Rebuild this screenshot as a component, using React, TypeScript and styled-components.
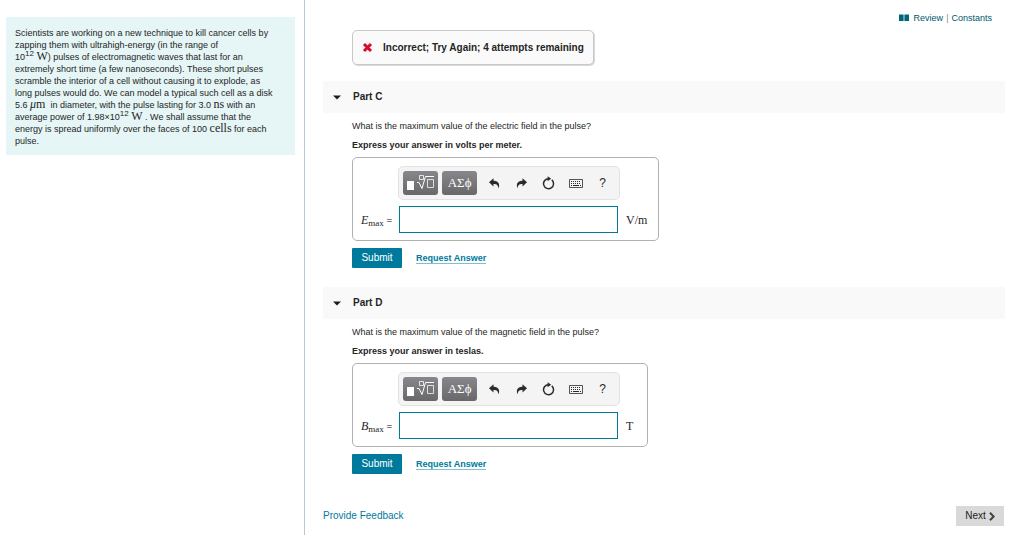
import React, { useId } from 'react';
import styled, { createGlobalStyle } from 'styled-components';

const SANS = '"Liberation Sans", Arial, Helvetica, sans-serif';
const SERIF = '"Liberation Serif", "Times New Roman", serif';
const TEAL = '#007a9c';

const GlobalStyle = createGlobalStyle`
  *, *::before, *::after { box-sizing: border-box; }
  body { margin: 0; background: #fff; color: #252525; font: 9px/12px ${SANS}; }
  p, h2 { margin: 0; }
  button, input { font: inherit; }
  svg { display: block; }
`;

const Page = styled.div`
  display: flex;
  min-height: 100vh;
`;

const Sidebar = styled.aside`
  flex: 0 0 305px;
  padding: 17px 9px 0 6px;
  border-right: 1px solid #b4c8dc;
`;

const Problem = styled.p`
  padding: 10px 9px 8px;
  background: #e6f5f6;
  white-space: nowrap;
`;

const Power = styled.sup`
  font-size: 8px;
  line-height: 0;
  vertical-align: 4px;
`;

const MathText = styled.span`
  font-family: ${SERIF};
  font-size: 12px;
  line-height: 0;
`;

const Main = styled.main`
  flex: 1;
  min-width: 0;
  padding: 12px 19px 9px 18px;
`;

const TopLinks = styled.nav`
  display: flex;
  justify-content: flex-end;
  align-items: center;
  gap: 3px;
  padding-right: 13px;
  color: #888;
`;

const TopLink = styled.a`
  display: flex;
  align-items: center;
  gap: 5px;
  color: #00566b;
  text-decoration: none;
`;

const Feedback = styled.div`
  display: flex;
  align-items: center;
  gap: 10px;
  width: fit-content;
  height: 35px;
  margin: 6px 0 16px 29px;
  padding: 0 9px;
  border: 1px solid #c8c8c8;
  border-radius: 5px;
  box-shadow: 1px 1px 0 #d8d8d8;
  background: #fafafa;
  font-size: 10px;
  font-weight: bold;
`;

const PartHeader = styled.h2`
  display: flex;
  align-items: center;
  gap: 12px;
  height: 32px;
  padding-left: 10px;
  background: #f9f9f9;
  font-size: 10px;
  font-weight: bold;
`;

const PartBody = styled.div`
  padding: 7px 0 19px 29px;
`;

const Instruction = styled.p`
  margin: 7px 0 6px;
  font-weight: bold;
`;

const AnswerBox = styled.div`
  display: grid;
  grid-template-columns: auto auto auto;
  align-items: center;
  gap: 6px;
  width: fit-content;
  height: 84px;
  padding: 8px 11px 7px 8px;
  border: 1px solid #b0b0b0;
  border-radius: 5px;
`;

const Toolbar = styled.div`
  grid-column: 2;
  display: flex;
  align-items: center;
  gap: 4px;
  height: 34px;
  padding: 0 3px 0 4px;
  border: 1px solid #e2e2e2;
  border-radius: 5px;
  background: #f4f4f4;
`;

const PaletteButton = styled.button`
  display: flex;
  align-items: center;
  justify-content: center;
  width: 35px;
  height: 24px;
  padding: 0;
  border: 0;
  border-radius: 3px;
  background: linear-gradient(#88888c, #68686a);
  color: #fff;
  font: 13px/16px ${SERIF};
`;

const ToolGroup = styled.div`
  display: flex;
`;

const ToolButton = styled.button`
  display: flex;
  align-items: center;
  justify-content: center;
  width: 27px;
  height: 24px;
  padding: 0;
  border: 0;
  background: none;
  color: #2b2b2b;
  font-size: 12px;
`;

const AnswerLabel = styled.label`
  grid-column: 1;
  font: 12px/14px ${SERIF};
`;

const Subscript = styled.sub`
  font-size: 9px;
  line-height: 0;
  vertical-align: -2px;
`;

const Equals = styled.span`
  margin-left: 3px;
  color: #777;
  font: bold 9px/12px ${SANS};
`;

const AnswerInput = styled.input`
  width: 219px;
  height: 27px;
  margin-left: 1px;
  padding: 0 6px;
  border: 1px solid ${TEAL};
  background: #fff;
`;

const Unit = styled.span`
  min-width: 10px;
  font: 12px/14px ${SERIF};
`;

const Actions = styled.div`
  display: flex;
  align-items: center;
  gap: 14px;
  margin-top: 7px;
`;

const SubmitButton = styled.button`
  width: 50px;
  height: 20px;
  padding: 0;
  border: 0;
  border-radius: 1px;
  background: ${TEAL};
  color: #fff;
  font-size: 10px;
`;

const RequestLink = styled.a`
  border-bottom: 1px solid #7fc0d0;
  color: ${TEAL};
  font-weight: bold;
  line-height: 10px;
  text-decoration: none;
`;

const Footer = styled.footer`
  display: flex;
  justify-content: space-between;
  align-items: center;
  padding: 13px 1px 0 0;
`;

const FooterLink = styled.a`
  color: ${TEAL};
  font-size: 10px;
  text-decoration: none;
`;

const NextButton = styled.button`
  display: flex;
  align-items: center;
  justify-content: center;
  gap: 3px;
  width: 48px;
  height: 20px;
  padding: 0;
  border: 0;
  border-radius: 1px;
  background: #d9d9d9;
  color: #222;
  font-size: 10px;
`;

const BookIcon = () => (
  <svg width="10" height="8" viewBox="0 0 10 8" fill="#00667c" aria-hidden="true">
    <path d="M0 .5h4.5v6.500H0zM5.500.5H10v6.500H5.500z" />
    <path d="M4.500 1h1v6.500h-1z" opacity=".4" />
  </svg>
);

const CrossIcon = () => (
  <svg width="11" height="11" viewBox="0 0 11 11" fill="none" aria-hidden="true">
    <path d="M2 2l7 7M9 2l-7 7" stroke="#dc0a28" strokeWidth="3" />
  </svg>
);

const CaretIcon = () => (
  <svg width="8" height="5" viewBox="0 0 8 5" aria-hidden="true">
    <path d="M0 .5h8L4 4.500z" fill="#1c1c1c" />
  </svg>
);

const TemplateIcon = () => (
  <svg width="27" height="16" viewBox="0 0 27 16" fill="none" stroke="#fff" aria-hidden="true">
    <path d="M0 6h7v9H0z" fill="#fff" stroke="none" />
    <path d="M12.500 .5h4v4h-4z" strokeWidth=".8" />
    <path d="M10 7.500h2l3 6L18.500 1.500H27" />
    <path d="M20.500 4.500h6v8h-6z" opacity=".75" />
  </svg>
);

const UndoIcon = () => (
  <svg width="11" height="11" viewBox="0 0 11 11" fill="currentColor" aria-hidden="true">
    <path d="M0 4.300 4.500.2v2.500c3.800 0 6 2.100 5.600 5.300-.1 1-.5 1.800-1 2.300.2-2.800-1-4.200-4.600-4.200v2.500z" />
  </svg>
);

const RedoIcon = () => (
  <svg width="11" height="11" viewBox="0 0 11 11" fill="currentColor" aria-hidden="true">
    <path d="M11 4.300 6.500.2v2.500C2.700 2.700.5 4.800.9 8c.1 1 .5 1.800 1 2.300-.2-2.800 1-4.200 4.600-4.200v2.500z" />
  </svg>
);

const ResetIcon = () => (
  <svg width="13" height="14" viewBox="0 0 13 14" fill="none" aria-hidden="true">
    <path d="M9.800 3.900A5 5 0 1 1 6.500 2.700" stroke="currentColor" strokeWidth="1.500" />
    <path d="M5.600.2 9.200 2.800 5.600 5.200z" fill="currentColor" />
  </svg>
);

const KeyboardIcon = () => (
  <svg width="14" height="9" viewBox="0 0 14 9" fill="none" stroke="currentColor" aria-hidden="true">
    <path d="M.5.5h13v8H.5z" strokeWidth=".8" />
    <path d="M2 2.500h10M2 4.500h10" strokeDasharray="1 1" />
    <path d="M2 6.500h1M4 6.500h6M11 6.500h1" />
  </svg>
);

const ChevronIcon = () => (
  <svg width="6" height="9" viewBox="0 0 6 9" fill="none" aria-hidden="true">
    <path d="M1 .8 4.600 4.500 1 8.200" stroke="#444" strokeWidth="2" />
  </svg>
);

interface PartProps {
  title: string;
  question: string;
  instruction: string;
  symbol: string;
  unit: string;
}

function Part({ title, question, instruction, symbol, unit }: PartProps) {
  const inputId = useId();
  return (
    <section>
      <PartHeader><CaretIcon />{title}</PartHeader>
      <PartBody>
        <p>{question}</p>
        <Instruction>{instruction}</Instruction>
        <AnswerBox>
          <Toolbar role="toolbar" aria-label="Equation tools">
            <PaletteButton type="button" aria-label="Templates"><TemplateIcon /></PaletteButton>
            <PaletteButton type="button">ΑΣϕ</PaletteButton>
            <ToolGroup>
              <ToolButton type="button" aria-label="Undo"><UndoIcon /></ToolButton>
              <ToolButton type="button" aria-label="Redo"><RedoIcon /></ToolButton>
              <ToolButton type="button" aria-label="Reset"><ResetIcon /></ToolButton>
              <ToolButton type="button" aria-label="Keyboard shortcuts"><KeyboardIcon /></ToolButton>
              <ToolButton type="button">?</ToolButton>
            </ToolGroup>
          </Toolbar>
          <AnswerLabel htmlFor={inputId}>
            <i>{symbol}</i><Subscript>max</Subscript><Equals>=</Equals>
          </AnswerLabel>
          <AnswerInput id={inputId} type="text" />
          <Unit>{unit}</Unit>
        </AnswerBox>
        <Actions>
          <SubmitButton type="button">Submit</SubmitButton>
          <RequestLink href="#answer">Request Answer</RequestLink>
        </Actions>
      </PartBody>
    </section>
  );
}

export default function App() {
  return (
    <>
      <GlobalStyle />
      <Page>
        <Sidebar>
          <Problem>
            Scientists are working on a new technique to kill cancer cells by<br />
            zapping them with ultrahigh-energy (in the range of<br />
            10<Power>12</Power> <MathText>W</MathText>) pulses of electromagnetic waves that last for an<br />
            extremely short time (a few nanoseconds). These short pulses<br />
            scramble the interior of a cell without causing it to explode, as<br />
            long pulses would do. We can model a typical such cell as a disk<br />
            5.6 <MathText><i>μ</i>m</MathText>{'\u00a0 '}in diameter, with the pulse lasting for 3.0 <MathText>ns</MathText> with an<br />
            average power of 1.98×10<Power>12</Power> <MathText>W</MathText> . We shall assume that the<br />
            energy is spread uniformly over the faces of 100 <MathText>cells</MathText> for each<br />
            pulse.
          </Problem>
        </Sidebar>
        <Main>
          <TopLinks>
            <TopLink href="#review"><BookIcon />Review</TopLink>
            <span>|</span>
            <TopLink href="#constants">Constants</TopLink>
          </TopLinks>
          <Feedback role="status">
            <CrossIcon />
            <span>Incorrect; Try Again; 4 attempts remaining</span>
          </Feedback>
          <Part
            title="Part C"
            question="What is the maximum value of the electric field in the pulse?"
            instruction="Express your answer in volts per meter."
            symbol="E"
            unit="V/m"
          />
          <Part
            title="Part D"
            question="What is the maximum value of the magnetic field in the pulse?"
            instruction="Express your answer in teslas."
            symbol="B"
            unit="T"
          />
          <Footer>
            <FooterLink href="#feedback">Provide Feedback</FooterLink>
            <NextButton type="button">Next<ChevronIcon /></NextButton>
          </Footer>
        </Main>
      </Page>
    </>
  );
}
